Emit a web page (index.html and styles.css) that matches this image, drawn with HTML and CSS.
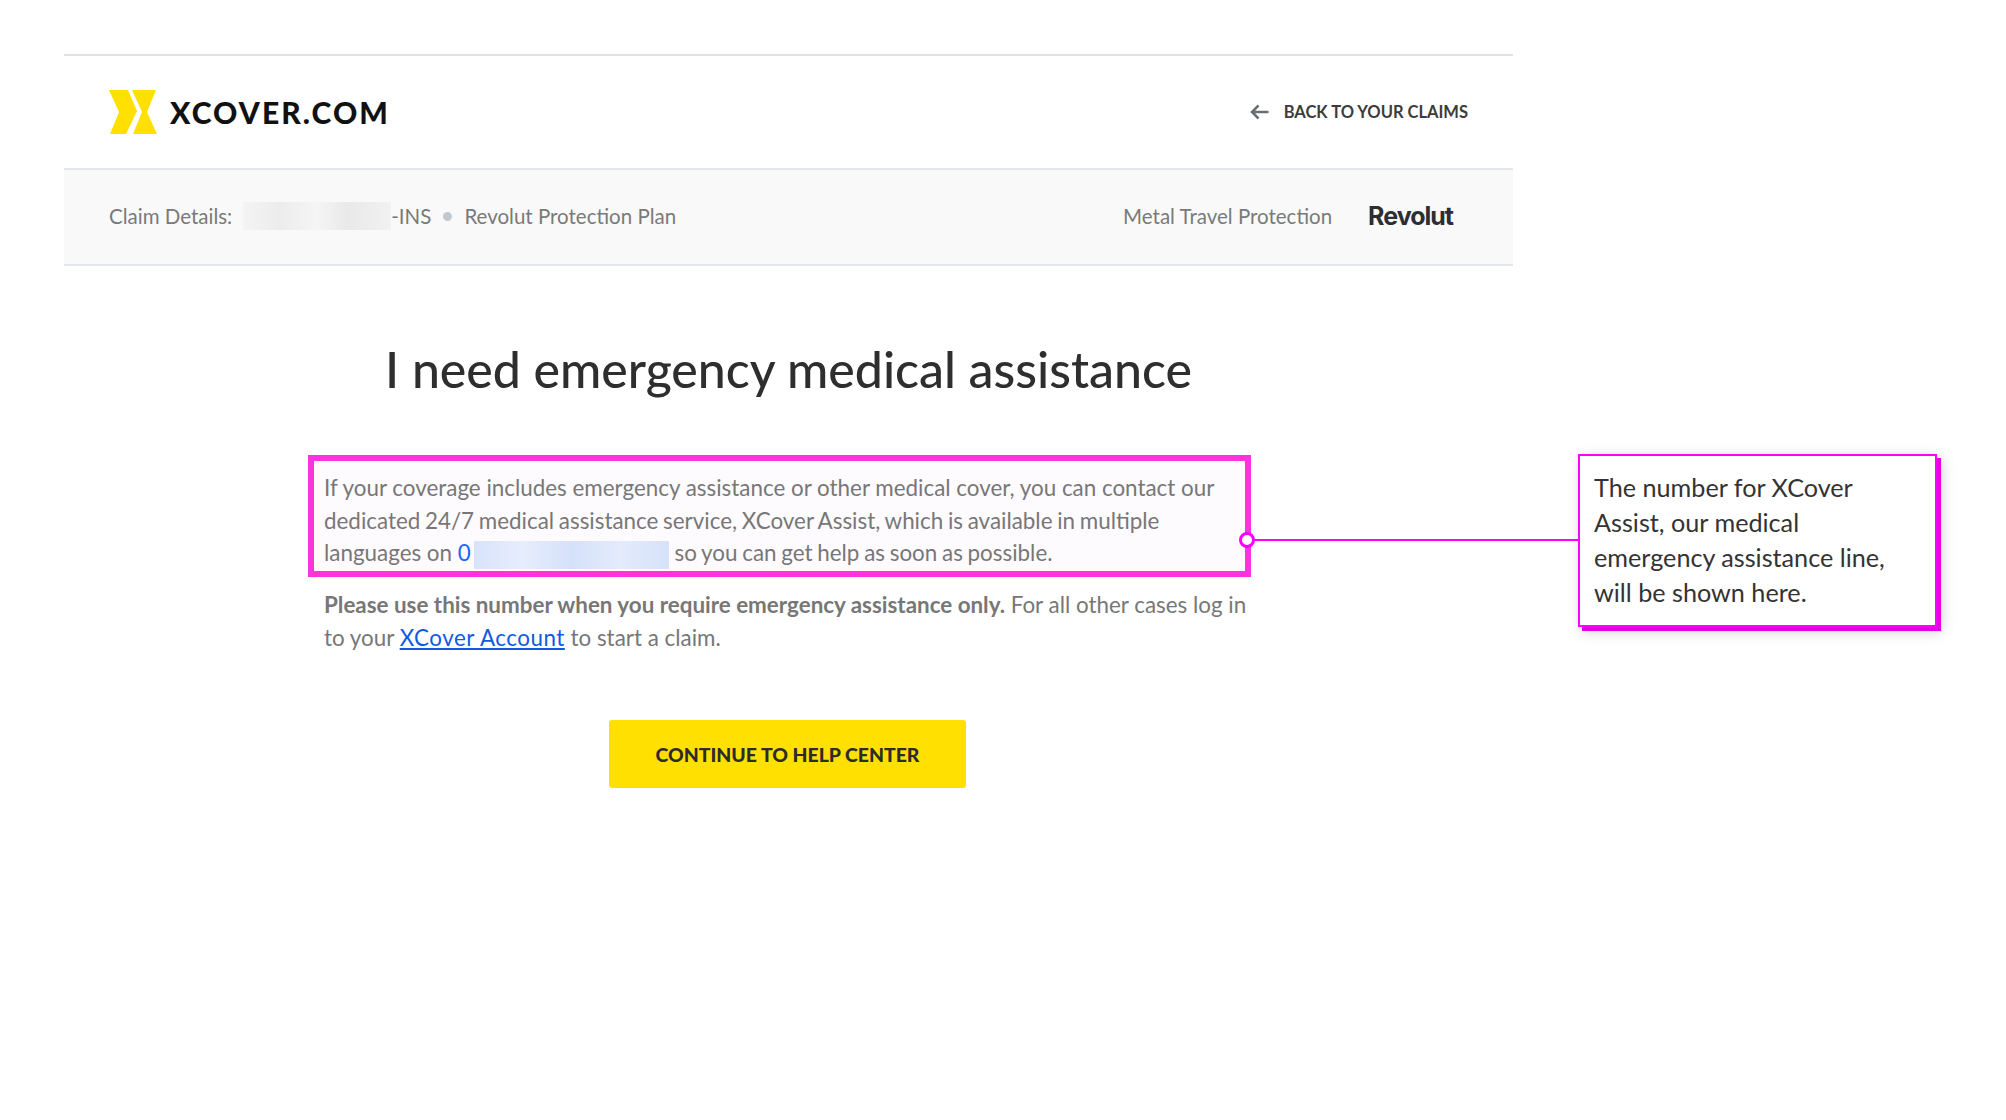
FILE: index.html
```html
<!DOCTYPE html>
<html lang="en">
<head>
<meta charset="UTF-8" />
<meta name="viewport" content="width=device-width, initial-scale=1" />
<title>I need emergency medical assistance</title>
<link rel="stylesheet" href="styles.css">
</head>
<body>

<div class="page">
  <header class="topbar">
    <div class="brand">
      <svg class="brand-mark" viewBox="0 0 48 44" aria-hidden="true">
        <path d="M0 0H19L28 21 17 44H1L10 22Z" />
        <path d="M23 0H47L38 22 48 44H24L33 22Z" />
      </svg>
      <span class="brand-name">XCOVER.COM</span>
    </div>
    <a class="back-link" href="#">
      <svg class="back-arrow" viewBox="0 0 20 16" aria-hidden="true">
        <path d="M18.500 8H2M8.500 1.500 2 8l6.500 6.500" />
      </svg>
      BACK TO YOUR CLAIMS
    </a>
  </header>

  <div class="claim-bar">
    <div class="claim-info">
      <span>Claim Details:</span>
      <span class="redacted redacted-grey"></span><span>-INS</span>
      <span class="dot"></span>
      <span>Revolut Protection Plan</span>
    </div>
    <div class="claim-plan">
      <span>Metal Travel Protection</span>
      <span class="partner">Revolut</span>
    </div>
  </div>

  <main class="main">
    <h1>I need emergency medical assistance</h1>
    <p class="highlight">
      If your coverage includes emergency assistance or other medical cover, you can contact our<br>
      <span class="tight">dedicated 24/7 medical assistance service, XCover Assist, which is available in multiple</span><br>
      languages on <a class="phone" href="#">0</a><span class="redacted redacted-blue"></span> <span class="tight">so you can get help as soon as possible.</span>
    </p>
    <p class="note-text">
      <strong>Please use this number when you require emergency assistance only.</strong> For all other cases log in<br>
      to your <a href="#">XCover Account</a> to start a claim.
    </p>
    <div class="actions">
      <a class="btn" href="#">CONTINUE TO HELP CENTER</a>
    </div>
  </main>
</div>

<div class="connector"><span class="connector-dot"></span></div>
<div class="callout">The number for XCover Assist, our medical emergency assistance line, will be shown here.</div>

</body>
</html>
```

FILE: styles.css
```css
body {
  margin: 0;
  background-color: #fff;
  font-family: Lato, "Open Sans", sans-serif;
  color: #777;
}
.page {
  width: 1449px;
  margin-left: 64px;
  padding-top: 54px;
}
.topbar {
  height: 112px;
  padding: 0 45px;
  border-top: 2px solid #e2e2e2;
  display: flex;
  align-items: center;
  justify-content: space-between;
}
.brand {
  display: flex;
  align-items: center;
  gap: 13px;
}
.brand-mark {
  width: 48px;
  height: 44px;
  fill: #ffe000;
}
.brand-name {
  font-size: 30px;
  font-weight: 900;
  letter-spacing: 2.1px;
  color: #111;
}
.back-link {
  display: flex;
  align-items: center;
  gap: 14px;
  font-size: 16.500px;
  font-weight: 700;
  color: #3c3c3c;
  text-decoration: none;
}
.back-arrow {
  width: 20px;
  height: 16px;
  fill: none;
  stroke: #6a6d72;
  stroke-width: 2.500;
}
.claim-bar {
  height: 92px;
  padding: 0 60px 2px 45px;
  background-color: #f9f9f9;
  border-top: 2px solid #e2e6ea;
  border-bottom: 2px solid #e2e6ea;
  display: flex;
  align-items: center;
  justify-content: space-between;
  font-size: 20.500px;
  color: #7a7a7a;
}
.claim-info {
  display: flex;
  align-items: center;
}
.claim-info .redacted {
  margin-left: 11px;
}
.dot {
  width: 9px;
  height: 9px;
  margin: 0 12px;
  border-radius: 50%;
  background-color: #c3c8d0;
}
.claim-plan {
  display: flex;
  align-items: center;
  gap: 36px;
}
.partner {
  font-family: Inter, sans-serif;
  font-size: 25px;
  font-weight: 700;
  letter-spacing: -1px;
  color: #2b2e33;
}
.redacted {
  display: inline-block;
  vertical-align: middle;
  filter: blur(0.5px);
}
.redacted-grey {
  width: 148px;
  height: 28px;
  background: linear-gradient(90deg, #f4f4f4, #ececec 25%, #f5f5f5 50%, #e9e9e9 70%, #f1f1f1);
}
.redacted-blue {
  width: 195px;
  height: 28px;
  margin-left: 3px;
  background: linear-gradient(90deg, #d8e3fb, #e6edfc 25%, #d5e1fa 50%, #e3ebfc 75%, #d6e2fa);
}
.main {
  padding: 0 260px;
}
h1 {
  margin: 0;
  padding-top: 65px;
  font-size: 50px;
  line-height: 76px;
  font-weight: 500;
  text-align: center;
  color: #2e2e2e;
  white-space: nowrap;
}
p {
  font-size: 22.400px;
  line-height: 32.500px;
}
.highlight {
  margin: 48px 2px 0 -16px;
  padding: 11px 10px 0;
  height: 122px;
  box-sizing: border-box;
  border: 6px solid #ff33dd;
  background-color: #fefbfe;
  white-space: nowrap;
}
.tight {
  word-spacing: -1px;
}
.phone {
  color: #1a66ff;
  text-decoration: none;
}
.note-text {
  margin: 12px 0 0;
  white-space: nowrap;
}
.note-text a {
  color: #0f5be0;
  letter-spacing: 0.5px;
}
.actions {
  display: flex;
  justify-content: center;
  margin-top: 66px;
  padding-right: 2px;
}
.btn {
  width: 357px;
  height: 68px;
  display: flex;
  align-items: center;
  justify-content: center;
  border-radius: 3px;
  background-color: #ffe000;
  font-size: 19.400px;
  font-weight: 900;
  color: #2c2c2c;
  text-decoration: none;
}
.connector {
  position: absolute;
  left: 1247px;
  top: 539px;
  width: 331px;
  height: 2px;
  background-color: #f0f;
}
.connector-dot {
  position: absolute;
  left: -8px;
  top: -7px;
  width: 16px;
  height: 16px;
  box-sizing: border-box;
  border: 3px solid #f0f;
  border-radius: 50%;
  background-color: #fff;
}
.callout {
  position: absolute;
  left: 1578px;
  top: 454px;
  width: 325px;
  height: 155px;
  padding: 14px 16px 0 14px;
  border: 2px solid #f0f;
  background-color: #fff;
  box-shadow: 4px 4px 0 #e600e6, 4px 4px 14px rgba(0, 0, 0, 0.2);
  font-size: 25.200px;
  line-height: 35px;
  color: #333;
}
```
